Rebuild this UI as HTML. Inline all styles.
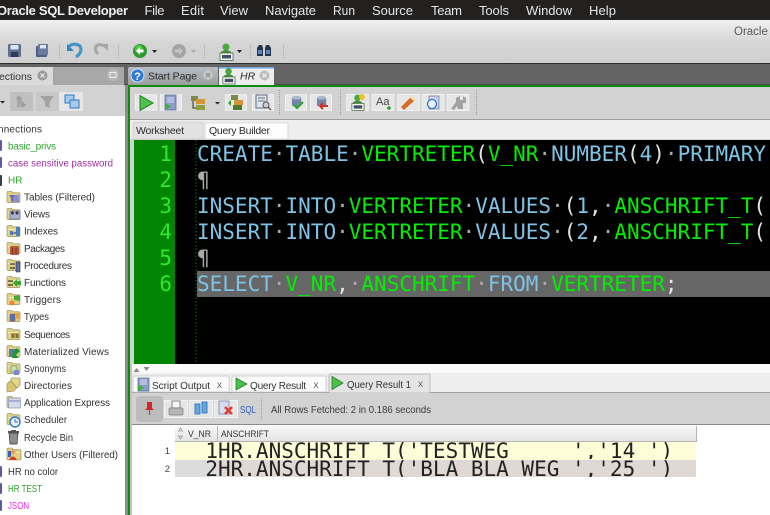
<!DOCTYPE html>
<html><head><meta charset="utf-8"><style>
html,body{margin:0;padding:0;background:#fff;width:770px;height:515px;overflow:hidden}
svg{display:block}
body>svg{filter:blur(.35px)}
text{font-family:"Liberation Sans",sans-serif}
text.m{font-family:"DejaVu Sans Mono",monospace;font-size:21px}
.k{fill:#7fc4e6}.g{fill:#00f000}.w{fill:#e4e4e4}.d{fill:#aaa}
.t{font-size:10px;fill:#333}
</style></head><body>
<svg width="770" height="515" viewBox="0 0 770 515" xmlns="http://www.w3.org/2000/svg">
<defs>
<linearGradient id="tb" x1="0" y1="0" x2="0" y2="1"><stop offset="0" stop-color="#f0f0f0"/><stop offset=".55" stop-color="#d4d4d4"/><stop offset="1" stop-color="#d0d0d0"/></linearGradient>
<linearGradient id="hd" x1="0" y1="0" x2="0" y2="1"><stop offset="0" stop-color="#f8f8f8"/><stop offset="1" stop-color="#e4e4e4"/></linearGradient>
<linearGradient id="tabg" x1="0" y1="0" x2="0" y2="1"><stop offset="0" stop-color="#b5bcc6"/><stop offset="1" stop-color="#9d9d9d"/></linearGradient>
<symbol id="f" viewBox="0 0 14 13" overflow="visible"><path d="M0 2.500Q0 1 1.500 1H5L6.500 2.500H12.500Q14 2.500 14 4V11.500Q14 13 12.500 13H1.500Q0 13 0 11.500Z" fill="#e0d084" stroke="#8d8350" stroke-width=".6"/><path d="M1 5H13V6H1Z" fill="#f4ecb8"/></symbol>
<symbol id="btn" viewBox="0 0 24 18"><rect x=".5" y=".5" width="23" height="17" fill="#e6e6e6" stroke="#f2f2f2"/></symbol>
<symbol id="db" viewBox="0 0 14 14" overflow="visible"><path d="M1 3V11C1 13 11 13 11 11V3Z" fill="#7487a8"/><ellipse cx="6" cy="3" rx="5" ry="2" fill="#aab6cd"/></symbol>
<symbol id="sq" viewBox="0 0 16 18" overflow="visible"><circle cx="8" cy="4" r="3.500" fill="#4aa83c"/><path d="M3 9Q8 5 13 9V11H3Z" fill="#3f8f3f"/><rect x="2" y="10" width="13" height="7.500" fill="#f4f4ea" stroke="#4c6a48" stroke-width=".8"/><rect x="4" y="12" width="9" height="3.500" fill="#40506c"/></symbol>
</defs>

<!-- menu bar -->
<rect width="770" height="20" fill="#222120"/>
<text x="-3" y="15" font-size="13" font-weight="700" fill="#efefef" textLength="131">Oracle SQL Developer</text>
<g font-size="13" fill="#e6e6e6">
<text x="144.500" y="15" textLength="20">File</text>
<text x="181" y="15" textLength="23">Edit</text>
<text x="220" y="15" textLength="28">View</text>
<text x="265" y="15" textLength="51">Navigate</text>
<text x="333" y="15" textLength="22" lengthAdjust="spacingAndGlyphs">Run</text>
<text x="372" y="15" textLength="41">Source</text>
<text x="431" y="15" textLength="31">Team</text>
<text x="479" y="15" textLength="30">Tools</text>
<text x="526" y="15" textLength="46">Window</text>
<text x="589" y="15" textLength="27">Help</text>
</g>

<!-- main toolbar -->
<rect y="20" width="770" height="43" fill="url(#tb)"/>
<text x="734" y="35" font-size="11.500" fill="#5a5a5a">Oracle</text>
<g>
<rect x="8" y="44" width="13" height="13" rx="1.500" fill="#5d6e93"/><rect x="10.500" y="45" width="8" height="4.500" fill="#dfe6f2"/><rect x="11" y="52" width="7" height="5" fill="#2f3a57"/>
<rect x="36" y="46" width="11" height="11" rx="1" fill="#4d5e85"/><rect x="38" y="44" width="10" height="11" rx="1" fill="#6a7ba0"/><rect x="40" y="45" width="6" height="3.500" fill="#dfe6f2"/>
<path d="M68 47Q74 42 80 46Q83 52 76 57" fill="none" stroke="#3f95c8" stroke-width="3"/><path d="M67 44V51H74Z" fill="#2f85bd"/>
<path d="M107 47Q100 43 96 46Q94 50 98 54" fill="none" stroke="#a3a8a3" stroke-width="3"/><path d="M101 44H108V51Z" fill="#a3a8a3"/>
<circle cx="140" cy="51" r="7" fill="#2c9a2c"/><circle cx="139" cy="49" r="4" fill="#4fcc45"/><path d="M143.500 49.500H140V47L136 51L140 55V52.500H143.500Z" fill="#fff"/>
<path d="M152 50h5l-2.500 3z" fill="#222"/>
<circle cx="179" cy="51" r="7" fill="#a5a5a5"/><path d="M175 49.500H179V47L183 51L179 55V52.500H175Z" fill="#c4c4c4"/>
<path d="M191 50h5l-2.500 3z" fill="#aaa"/>
<use href="#sq" x="218" y="43" width="16" height="18"/>
<path d="M237 50h5l-2.500 3z" fill="#222"/>
<path d="M257 48l2-3h3l1 3v8h-6zM265 48l1-3h3l2 3v8h-6z" fill="#24334f"/><rect x="258" y="50" width="4" height="4" fill="#5c86bc"/><rect x="266" y="50" width="4" height="4" fill="#5c86bc"/>
<g stroke="#aaa" stroke-width="1" stroke-dasharray="1 1"><path d="M59.500 45V58M118.500 45V58M204.500 45V58M250.500 45V58M283.500 45V58"/></g>
</g>

<!-- tab strip -->
<rect y="63" width="770" height="22" fill="#646464"/>
<rect y="63" width="770" height="1" fill="#2c2c2c"/>
<rect y="84" width="770" height="1" fill="#4d4d4d"/>

<!-- left panel tabs -->
<rect x="0" y="67" width="53" height="18" fill="#dadada"/>
<rect x="53" y="67" width="71" height="18" fill="#a8a8a8"/>
<text x="-1" y="80" font-size="10.500" fill="#333" textLength="33">ections</text>
<circle cx="42.500" cy="75.500" r="5" fill="#9a9a9a"/><path d="M40.500 73.500l4 4m0-4l-4 4" stroke="#eee" stroke-width="1.200"/>
<circle cx="113" cy="75" r="6" fill="#b8b8b8"/><rect x="110" y="72.500" width="6" height="5" fill="none" stroke="#eee"/>

<!-- left panel -->
<rect x="0" y="85" width="125" height="31" fill="#d2d2d2"/>
<path d="M0 101h5l-2.500 2.500z" fill="#222"/>
<rect x="10" y="92" width="23" height="19" fill="#c0c0c0"/><path d="M16 98l4-3v7zM26 105l-4 3v-7z" fill="#9c9c9c"/><path d="M17 97h5v10h-5z" fill="#9c9c9c" opacity=".7"/>
<rect x="36" y="92" width="23" height="19" fill="#c8c8c8"/><path d="M40 96H54L49.500 102V108L45 106V102Z" fill="#a2a2a2"/>
<rect x="59" y="92" width="24" height="19" fill="#e6e6e6"/><rect x="65" y="95" width="9" height="8" fill="#a8c8ec" stroke="#2d78c4"/><rect x="70" y="100" width="9" height="8" fill="#a8c8ec" stroke="#2d78c4"/>
<rect x="0" y="116" width="125" height="399" fill="#fff"/>

<!-- tree -->
<g>
<text x="-2" y="132.500" class="t" textLength="44">nnections</text>
<text x="8" y="149.500" font-size="10" fill="#2ea52e" textLength="48">basic_privs</text>
<text x="8" y="166.500" font-size="10" fill="#a62fa6" textLength="105" lengthAdjust="spacingAndGlyphs">case sensitive password</text>
<text x="8" y="183.500" font-size="10" fill="#2ea52e">HR</text>
<text x="24" y="200.500" class="t" textLength="71">Tables (Filtered)</text>
<text x="24" y="217.500" class="t" textLength="26">Views</text>
<text x="24" y="234.500" class="t" textLength="34">Indexes</text>
<text x="24" y="251.800" class="t" textLength="41">Packages</text>
<text x="24" y="269" class="t" textLength="48">Procedures</text>
<text x="24" y="286" class="t" textLength="42">Functions</text>
<text x="24" y="303" class="t" textLength="37">Triggers</text>
<text x="24" y="320" class="t" textLength="25" lengthAdjust="spacingAndGlyphs">Types</text>
<text x="24" y="338" class="t" textLength="46">Sequences</text>
<text x="24" y="355" class="t" textLength="85">Materialized Views</text>
<text x="24" y="372" class="t" textLength="42" lengthAdjust="spacingAndGlyphs">Synonyms</text>
<text x="24" y="389" class="t" textLength="48">Directories</text>
<text x="24" y="406" class="t" textLength="86">Application Express</text>
<text x="24" y="423" class="t" textLength="43" lengthAdjust="spacingAndGlyphs">Scheduler</text>
<text x="24" y="441" class="t" textLength="49" lengthAdjust="spacingAndGlyphs">Recycle Bin</text>
<text x="24" y="458" class="t" textLength="94" lengthAdjust="spacingAndGlyphs">Other Users (Filtered)</text>
<text x="8" y="475" class="t" textLength="50" lengthAdjust="spacingAndGlyphs">HR no color</text>
<text x="8" y="492" font-size="10" fill="#2ea52e" textLength="34" lengthAdjust="spacingAndGlyphs">HR TEST</text>
<text x="8" y="509" font-size="10" fill="#f02cf0" textLength="21" lengthAdjust="spacingAndGlyphs">JSON</text>
</g>
<g fill="#5a5aa8"><rect x="-2" y="140" width="4" height="11" rx="1.500"/><rect x="-2" y="157" width="4" height="11" rx="1.500"/><rect x="-2" y="466" width="4" height="11" rx="1.500"/><rect x="-2" y="483" width="4" height="11" rx="1.500"/><rect x="-2" y="500" width="4" height="11" rx="1.500"/></g>
<rect x="-2" y="175" width="4" height="11" rx="1" fill="#3a3f48"/>

<!-- tree icons -->
<g>
<use href="#f" x="7" y="190" width="13" height="13"/><path d="M11 195h8v7h-8z" fill="#8f8fcf"/><path d="M9 195h6l-2 3v3h-2v-3z" fill="#6b6bb8"/>
<use href="#f" x="7" y="207" width="13" height="13"/><rect x="10" y="211" width="10" height="8" fill="#a8b4cc" stroke="#55607a" stroke-width=".6"/><circle cx="12.500" cy="213" r="1.500" fill="#334"/><circle cx="17" cy="213" r="1.500" fill="#334"/>
<use href="#f" x="7" y="224" width="13" height="13"/><rect x="10" y="231" width="3" height="4" fill="#4a80c0"/><rect x="16" y="227" width="4" height="9" fill="#4a80c0"/><path d="M13 233h3" stroke="#335"/>
<use href="#f" x="7" y="241" width="13" height="13"/><rect x="10" y="246" width="9" height="9" rx="1.500" fill="#b45a3a"/><path d="M12.500 248v6M16 248v6" stroke="#7c2f1c"/>
<use href="#f" x="7" y="258" width="13" height="13"/><rect x="16" y="262" width="4" height="10" fill="#5c6ea8" stroke="#222" stroke-width=".5"/><path d="M10 264h5M10 268h5" stroke="#111"/>
<use href="#f" x="7" y="275" width="13" height="13"/><path d="M13 283l4-4v2h4v4h-4v2z" fill="#37a837"/><path d="M8 281h5M8 285h5" stroke="#111"/>
<use href="#f" x="7" y="292" width="13" height="13"/><path d="M14 296l6-1v6l-6-1z" fill="#4aa83c"/><circle cx="12" cy="303" r="2.500" fill="#e98a30"/>
<use href="#f" x="7" y="309" width="13" height="13"/><rect x="10" y="314" width="5" height="7" fill="#3f79c6" stroke="#c33" stroke-width=".5"/><rect x="15" y="313" width="5" height="6" fill="#e8a438"/>
<use href="#f" x="7" y="327" width="13" height="13"/><path d="M11 333h8v5h-8z" fill="#b29a4c"/><path d="M13 334v4M17 334v4" stroke="#443"/>
<use href="#f" x="7" y="344" width="13" height="13"/><rect x="9" y="349" width="7" height="8" fill="#5e7aa0"/><path d="M13 352l4-4 3 3-4 4 3 3h-7z" fill="#1e9a2a"/>
<use href="#f" x="7" y="361" width="13" height="13"/><rect x="11" y="366" width="6" height="6" fill="#c9e3b5" stroke="#6a8f5e" stroke-width=".7"/><rect x="14" y="370" width="5" height="5" fill="#7f86c8"/>
<path d="M7 392V384L10 381H17V387L14 391Z" fill="#d6c56e" stroke="#8d8350" stroke-width=".6"/><path d="M11 381V378H20V385L17 388Z" fill="#e6d68a" stroke="#8d8350" stroke-width=".6"/>
<use href="#f" x="7" y="395" width="13" height="13"/><rect x="8.500" y="398" width="12" height="10" fill="#d6d8ec" stroke="#8888a8" stroke-width=".6"/><rect x="8.500" y="400" width="12" height="2" fill="#a4abd6"/>
<use href="#f" x="7" y="412" width="13" height="13"/><circle cx="15" cy="422" r="5" fill="#e8f0fa" stroke="#2e78c8" stroke-width="1.400"/><path d="M15 419v3h3" stroke="#2e78c8" fill="none"/>
<path d="M9 433h9l-1 11h-7z" fill="#8c8c8c" stroke="#333" stroke-width=".7"/><rect x="8" y="431" width="11" height="2" fill="#555"/><rect x="11" y="430" width="5" height="1.500" fill="#555"/>
<use href="#f" x="7" y="447" width="14" height="13"/><circle cx="13" cy="452" r="2.500" fill="#e3a06a"/><path d="M9 460Q13 453 17 460Z" fill="#d23a2a"/><rect x="8" y="451" width="3" height="6" fill="#3a60b0"/>
</g>

<!-- splitter and frame -->
<rect x="125" y="85" width="3" height="430" fill="#8c8c8c"/>
<rect x="128" y="85" width="642" height="430" fill="#d2d2d2"/>
<rect x="128" y="85" width="2" height="430" fill="#0c8c0c"/>
<rect x="128" y="85" width="642" height="2" fill="#0c8c0c"/>

<!-- doc tabs -->
<path d="M128 85V69Q128 67 130 67H218V85Z" fill="url(#tabg)"/>
<circle cx="137.500" cy="75.500" r="6.500" fill="#2f79d8" stroke="#cfe2f8"/>
<text x="137.500" y="80" font-size="11" font-weight="700" fill="#fff" text-anchor="middle">?</text>
<text x="148" y="79.500" font-size="10.500" fill="#2a2a2a" textLength="49">Start Page</text>
<circle cx="208" cy="75" r="5" fill="#c6c6c6"/><path d="M206 73l4 4m0-4l-4 4" stroke="#888" stroke-width="1.100"/>
<path d="M219 85V69Q219 67 221 67H274V85Z" fill="#ededed"/>
<rect x="219" y="67" width="55" height="1.500" fill="#6fa5e0"/>
<use href="#sq" x="221" y="67.500" width="15" height="17"/>
<text x="240" y="79.500" font-size="10.500" font-style="italic" fill="#2a2a2a">HR</text>
<circle cx="264.500" cy="75.500" r="5" fill="#bcbcbc"/><path d="M262.500 73.500l4 4m0-4l-4 4" stroke="#f2f2f2" stroke-width="1.100"/>

<!-- editor toolbar -->
<rect x="130" y="87" width="640" height="32" fill="#d2d2d2"/>
<rect x="130" y="119" width="640" height="1" fill="#9e9e9e"/>
<rect x="130" y="120" width="640" height="19" fill="#eeeeee"/>
<g>
<use href="#btn" x="135" y="94" width="22" height="17"/><path d="M140 95.500L153 103L140 110.500Z" fill="#4fc04a" stroke="#267a26"/>
<use href="#btn" x="160" y="94" width="22" height="17"/><rect x="165" y="95" width="11" height="15" fill="#8a9cc8" stroke="#5a6a90" stroke-width=".7"/><path d="M167 98h7M167 100h7M167 102h7" stroke="#dde"/><path d="M165 103l6 3.500-6 3.500z" fill="#3db03a"/>
<rect x="191" y="96" width="7" height="5" fill="#7f8a48"/><rect x="196" y="99" width="9" height="5" fill="#d49538"/><rect x="196" y="105" width="9" height="5" fill="#8fa040"/><path d="M193 101v7h3" stroke="#333" fill="none"/>
<path d="M215 102h5l-2.500 2.500z" fill="#222"/>
<use href="#btn" x="225" y="94" width="22" height="17"/><rect x="231" y="95" width="7" height="5" fill="#7f8a48"/><rect x="234" y="100" width="9" height="5" fill="#d49538"/><rect x="233" y="105" width="9" height="5" fill="#4e7a30"/><path d="M228 103l3-3v6z" fill="#2f9f2f"/>
<use href="#btn" x="252" y="94" width="22" height="17"/><rect x="256" y="95" width="11" height="13" fill="#dfe3ea" stroke="#667088"/><path d="M258 98h7M258 101h7" stroke="#667088"/><circle cx="266" cy="105" r="3" fill="#ccd" stroke="#555"/><path d="M268 107l3 3" stroke="#555" stroke-width="1.400"/>
<use href="#btn" x="285" y="94" width="22" height="17"/><use href="#db" x="291" y="95" width="13" height="13"/><path d="M294 105l3 3 6-6" fill="none" stroke="#2fa52f" stroke-width="2.200"/>
<use href="#btn" x="310" y="94" width="22" height="17"/><use href="#db" x="316" y="95" width="13" height="13"/><path d="M320 106h8M320 106l3-3M320 106l3 3" fill="none" stroke="#d0332a" stroke-width="2"/>
<use href="#btn" x="346" y="94" width="23" height="17"/><use href="#sq" x="350" y="94" width="15" height="17"/><circle cx="362" cy="97" r="3" fill="#f0c030"/>
<use href="#btn" x="371" y="94" width="24" height="17"/><text x="376" y="105" font-size="11" fill="#444">Aa</text><path d="M387 108h4M389 106v4" stroke="#2a9a2a" stroke-width="1.500"/>
<use href="#btn" x="396" y="94" width="25" height="17"/><path d="M401 107l10-10 4 3-11 10z" fill="#d66a2a"/><path d="M410 98l2-2 4 3-2 2z" fill="#f2e4a8"/>
<use href="#btn" x="421" y="94" width="24" height="17"/><rect x="429" y="96" width="10" height="13" fill="#c9cfe6" stroke="#6a78a8" stroke-width=".7"/><circle cx="432" cy="104" r="4.500" fill="#e8f0fa" stroke="#2e78c8" stroke-width="1.300"/>
<use href="#btn" x="446" y="94" width="24" height="17"/><path d="M451 109l5-7v-4l4-2v4l3 0v-4l3 2v5h-3v6h-5l-1-3-3 4z" fill="#a2a2a2"/>
<g stroke="#9a9a9a" stroke-dasharray="1 1"><path d="M279.500 90V115M340.500 90V115M476.500 90V115"/></g>
</g>

<!-- worksheet tabs -->
<path d="M133 139V124Q133 122 135 122H203V139Z" fill="#e2e2e2" stroke="#c4c4c4" stroke-width=".6"/>
<path d="M205 139V125Q205 123 207 123H288V139Z" fill="#fdfdfd" stroke="#c4c4c4" stroke-width=".6"/>
<text x="136" y="134" font-size="10.500" fill="#2a2a2a" textLength="48">Worksheet</text>
<text x="209" y="134" font-size="10.500" fill="#2a2a2a" textLength="61">Query Builder</text>

<!-- editor -->
<rect x="134" y="140" width="636" height="224" fill="#000"/>
<rect x="134" y="140" width="41" height="224" fill="#028502"/>
<path d="M196 140V364" stroke="#0a7a0a" stroke-dasharray="1.500 2"/>
<rect x="197" y="271" width="573" height="26" fill="#666"/>
<g fill="#2fe82f" text-anchor="end">
<text class="m" x="172" y="161">1</text><text class="m" x="172" y="187">2</text><text class="m" x="172" y="213">3</text><text class="m" x="172" y="239">4</text><text class="m" x="172" y="265">5</text><text class="m" x="172" y="291">6</text>
</g>
<text class="m" xml:space="preserve" x="197" y="161"><tspan class="k">CREATE</tspan><tspan class="d">·</tspan><tspan class="k">TABLE</tspan><tspan class="d">·</tspan><tspan class="g">VERTRETER</tspan><tspan class="w">(</tspan><tspan class="g">V_NR</tspan><tspan class="d">·</tspan><tspan class="k">NUMBER</tspan><tspan class="w">(</tspan><tspan class="k">4</tspan><tspan class="w">)</tspan><tspan class="d">·</tspan><tspan class="k">PRIMARY</tspan><tspan class="d">·</tspan></text>
<text class="m d" x="197" y="187">¶</text>
<text class="m" xml:space="preserve" x="197" y="213"><tspan class="k">INSERT</tspan><tspan class="d">·</tspan><tspan class="k">INTO</tspan><tspan class="d">·</tspan><tspan class="g">VERTRETER</tspan><tspan class="d">·</tspan><tspan class="k">VALUES</tspan><tspan class="d">·</tspan><tspan class="w">(</tspan><tspan class="k">1</tspan><tspan class="w">,</tspan><tspan class="d">·</tspan><tspan class="g">ANSCHRIFT_T</tspan><tspan class="w">('</tspan></text>
<text class="m" xml:space="preserve" x="197" y="239"><tspan class="k">INSERT</tspan><tspan class="d">·</tspan><tspan class="k">INTO</tspan><tspan class="d">·</tspan><tspan class="g">VERTRETER</tspan><tspan class="d">·</tspan><tspan class="k">VALUES</tspan><tspan class="d">·</tspan><tspan class="w">(</tspan><tspan class="k">2</tspan><tspan class="w">,</tspan><tspan class="d">·</tspan><tspan class="g">ANSCHRIFT_T</tspan><tspan class="w">('</tspan></text>
<text class="m d" x="197" y="265">¶</text>
<text class="m" xml:space="preserve" x="197" y="291"><tspan class="k">SELECT</tspan><tspan class="d">·</tspan><tspan class="g">V_NR</tspan><tspan class="w">,</tspan><tspan class="d">·</tspan><tspan class="g">ANSCHRIFT</tspan><tspan class="d">·</tspan><tspan class="k">FROM</tspan><tspan class="d">·</tspan><tspan class="g">VERTRETER</tspan><tspan class="w">;</tspan></text>

<!-- splitter below editor -->
<rect x="130" y="364" width="640" height="11" fill="#fafafa"/>
<path d="M133.500 372l3-4 3 4zM143.500 367h6l-3 4z" fill="#8a8a8a"/>

<!-- result tabs -->
<rect x="130" y="373" width="640" height="20" fill="#eeeeee"/>
<rect x="130" y="392" width="640" height="1" fill="#a0a0a0"/>
<path d="M133 392V378Q133 376 135 376H229V392Z" fill="#fbfbfb" stroke="#c2c2c2" stroke-width=".7"/>
<path d="M232 392V378Q232 376 234 376H326V392Z" fill="#fbfbfb" stroke="#c2c2c2" stroke-width=".7"/>
<path d="M329 393V376Q329 374 331 374H430V393Z" fill="#e4e4e4" stroke="#b2b2b2" stroke-width=".8"/>
<rect x="138" y="378" width="11" height="13" fill="#8a9cc8" stroke="#5a6a90" stroke-width=".7"/><path d="M140 380h7M140 382h7M140 384h7" stroke="#dde"/><path d="M138 385l6 3-6 3z" fill="#3db03a"/>
<text x="152" y="389" font-size="10" fill="#333" textLength="58">Script Output</text>
<text x="219.500" y="388" font-size="10" fill="#666" text-anchor="middle">x</text>
<path d="M236 378L247 384L236 390Z" fill="#4cc048" stroke="#2a7a2a" stroke-width=".8"/>
<text x="250" y="389" font-size="10" fill="#333" textLength="56">Query Result</text>
<text x="316" y="388" font-size="10" fill="#666" text-anchor="middle">x</text>
<path d="M332 376.500L343 383L332 389.500Z" fill="#4cc048" stroke="#2a7a2a" stroke-width=".8"/>
<text x="347" y="388" font-size="10" fill="#333" textLength="64" lengthAdjust="spacingAndGlyphs">Query Result 1</text>
<text x="420.500" y="387" font-size="10" fill="#666" text-anchor="middle">x</text>

<!-- result toolbar -->
<rect x="130" y="393" width="640" height="31" fill="#d2d2d2"/>
<rect x="130" y="424" width="640" height="1" fill="#8a8a8a"/>
<rect x="136" y="396" width="27" height="26" rx="3" fill="#bcbcbc"/>
<path d="M147 402h5v6l2 2h-9l2-2z" fill="#d02828"/><path d="M149.500 410v5" stroke="#666" stroke-width="1.200"/>
<use href="#btn" x="164" y="400" width="24" height="18"/><rect x="172" y="401" width="8" height="7" fill="#f5f5f5" stroke="#888"/><rect x="169" y="408" width="14" height="7" rx="1.500" fill="#b6b6b6" stroke="#777" stroke-width=".7"/>
<use href="#btn" x="189" y="400" width="24" height="18"/><path d="M195 404h5v10h-5zM202 402h5v11h-5z" fill="#63a8e0" stroke="#1e6ab0" stroke-width=".8"/>
<use href="#btn" x="214" y="400" width="24" height="18"/><rect x="219" y="401" width="10" height="13" fill="#d8dcee" stroke="#6a78a8" stroke-width=".7"/><path d="M225 407l7 7m0-7l-7 7" stroke="#e0402a" stroke-width="2.600"/>
<text x="240" y="413" font-size="10" fill="#2b5fb8" textLength="16" lengthAdjust="spacingAndGlyphs">SQL</text>
<path d="M261.500 398V420" stroke="#9a9a9a" stroke-dasharray="1 1"/>
<text x="271" y="413" font-size="10" fill="#3a3a3a" textLength="160" lengthAdjust="spacingAndGlyphs">All Rows Fetched: 2 in 0.186 seconds</text>

<!-- grid -->
<rect x="130" y="425" width="640" height="90" fill="#fff"/>
<rect x="130" y="364" width="2" height="151" fill="#c4c4c4"/>
<rect x="175" y="426" width="522" height="15" fill="url(#hd)"/>
<path d="M175 441.500H696.500V426" fill="none" stroke="#b4b4b4"/>
<path d="M217.500 426V441" stroke="#b8b8b8"/>
<path d="M180.500 428l-2 3h4zM180.500 439l-2-3h4z" fill="none" stroke="#999" stroke-width=".8"/>
<text x="188" y="437" font-size="9.500" fill="#333" textLength="23" lengthAdjust="spacingAndGlyphs">V_NR</text>
<text x="221" y="437" font-size="9.500" fill="#333" textLength="48" lengthAdjust="spacingAndGlyphs">ANSCHRIFT</text>
<rect x="175" y="442" width="521" height="18" fill="#fdfdd8"/>
<rect x="175" y="460" width="43" height="17" fill="#dcdcdc"/>
<rect x="218" y="460" width="478" height="17" fill="#e0d8d4"/>
<text x="170" y="454" font-size="9.500" fill="#444" text-anchor="end">1</text>
<text x="170" y="472" font-size="9.500" fill="#444" text-anchor="end">2</text>
<svg x="175" y="442" width="521" height="17"><g fill="#222"><text class="m" x="43" y="16" text-anchor="end">1</text><text class="m" xml:space="preserve" x="43" y="16">HR.ANSCHRIFT_T('TESTWEG     ','14 ')</text></g></svg>
<svg x="175" y="460" width="521" height="17"><g fill="#222"><text class="m" x="43" y="16" text-anchor="end">2</text><text class="m" xml:space="preserve" x="43" y="16">HR.ANSCHRIFT_T('BLA BLA WEG ','25 ')</text></g></svg>
</svg>
</body></html>
